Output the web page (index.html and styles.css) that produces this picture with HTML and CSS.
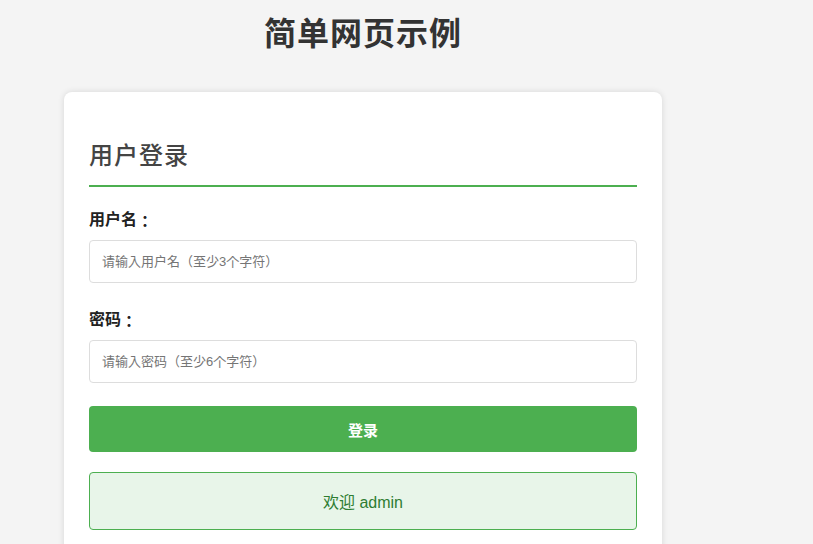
FILE: index.html
```html
<!DOCTYPE html>
<html lang="zh-CN">
<head>
<meta charset="UTF-8">
<title>简单网页示例</title>
<link rel="stylesheet" href="styles.css">
</head>
<body>
<div class="page">
  <h1 class="title">简单网页示例</h1>
  <div class="card">
    <h2 class="card-title">用户登录</h2>
    <div class="group group-user">
      <label class="label" for="u">用户名<span class="punct" lang="ja">：</span></label>
      <input class="input" id="u" type="text" lang="ja" placeholder="请输入用户名（至少3个字符）">
    </div>
    <div class="group group-pass">
      <label class="label" for="p">密码<span class="punct" lang="ja">：</span></label>
      <input class="input" id="p" type="password" lang="ja" placeholder="请输入密码（至少6个字符）">
    </div>
    <button class="btn" type="button">登录</button>
    <div class="message">欢迎 admin</div>
  </div>
</div>
</body>
</html>
```

FILE: styles.css
```css
html, body {
  margin: 0;
  padding: 0;
  background: #f4f4f4;
  font-family: "Liberation Sans", Arial, "Noto Sans CJK SC", sans-serif;
  height: 100%;
  overflow: hidden;
}
.page {
  width: 598px;
  margin-left: 64px;
}
.title {
  margin: 14px 0 38px;
  font-size: 32px;
  line-height: 40px;
  font-weight: 700;
  letter-spacing: 1px;
  color: #333;
  text-align: center;
}
.card {
  background: #fff;
  border-radius: 8px;
  box-shadow: 0 0 6px rgba(0,0,0,0.12);
  padding: 25px 25px 40px;
}
.card-title {
  margin: 23px 0 23px;
  padding-bottom: 13px;
  border-bottom: 2px solid #4caf50;
  font-size: 24px;
  line-height: 32px;
  font-weight: 500;
  letter-spacing: 1px;
  color: #444;
}
.group-user { margin-bottom: 27px; }
.group-pass { margin-bottom: 23px; }
.label {
  display: block;
  height: 20px;
  font-size: 16px;
  line-height: 20px;
  font-weight: 700;
  color: #222;
  margin-bottom: 10px;
}
.punct {
  font-family: "Noto Sans CJK JP", sans-serif;
  text-spacing-trim: space-all;
  vertical-align: top;
}
.input {
  display: block;
  box-sizing: border-box;
  width: 100%;
  height: 43px;
  padding: 0 12px;
  border: 1px solid #ddd;
  border-radius: 4px;
  font-family: "Liberation Sans", Arial, "Noto Sans CJK JP", sans-serif;
  font-size: 13px;
  color: #333;
  background: #fff;
  text-spacing-trim: space-all;
}
.input::placeholder {
  color: #757575;
}
.btn {
  display: block;
  width: 100%;
  height: 46px;
  border: none;
  border-radius: 4px;
  background: #4caf50;
  color: #fff;
  font-family: inherit;
  font-size: 15px;
  font-weight: 700;
}
.message {
  margin-top: 20px;
  box-sizing: border-box;
  height: 58px;
  display: flex;
  align-items: center;
  justify-content: center;
  background: #e8f5e9;
  border: 1px solid #4caf50;
  border-radius: 4px;
  color: #2e7d32;
  font-size: 16px;
}
```
